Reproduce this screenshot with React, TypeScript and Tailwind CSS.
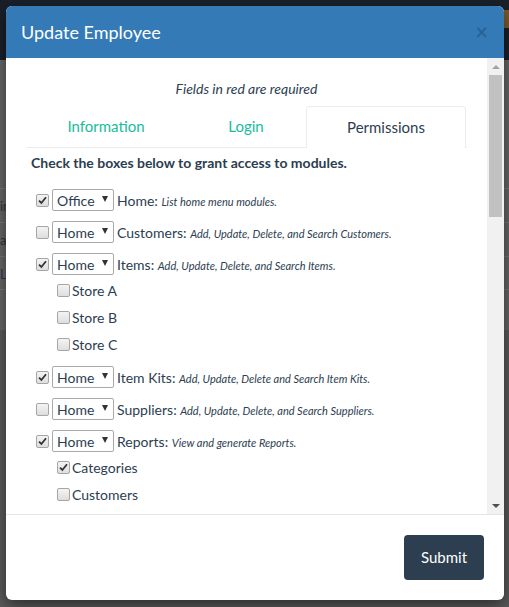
import React from 'react';

type Sub = { label: string; checked: boolean };
type Row = { checked: boolean; loc: string; name: string; desc: string; subs?: Sub[] };

const rows: Row[] = [
  { checked: true, loc: 'Office', name: 'Home', desc: 'List home menu modules.' },
  { checked: false, loc: 'Home', name: 'Customers', desc: 'Add, Update, Delete, and Search Customers.' },
  {
    checked: true,
    loc: 'Home',
    name: 'Items',
    desc: 'Add, Update, Delete, and Search Items.',
    subs: [
      { label: 'Store A', checked: false },
      { label: 'Store B', checked: false },
      { label: 'Store C', checked: false },
    ],
  },
  { checked: true, loc: 'Home', name: 'Item Kits', desc: 'Add, Update, Delete and Search Item Kits.' },
  { checked: false, loc: 'Home', name: 'Suppliers', desc: 'Add, Update, Delete, and Search Suppliers.' },
  {
    checked: true,
    loc: 'Home',
    name: 'Reports',
    desc: 'View and generate Reports.',
    subs: [
      { label: 'Categories', checked: true },
      { label: 'Customers', checked: false },
    ],
  },
];

function Check({ on }: { on: boolean }) {
  return (
    <span className="w-[13px] h-[13px] shrink-0 rounded-[2px] border border-[#a6a6a6] bg-gradient-to-b from-[#f4f4f4] to-[#dedede] flex items-center justify-center">
      {on && (
        <svg width="9" height="9" viewBox="0 0 9 9">
          <path d="M1 4.6 L3.4 7 L8 1.2" fill="none" stroke="#333" strokeWidth="1.8" />
        </svg>
      )}
    </span>
  );
}

function Select({ value }: { value: string }) {
  return (
    <span className="w-[62px] h-[22px] shrink-0 border border-[#a9a9a9] rounded-[2px] bg-white flex items-center justify-between pl-[4px] pr-[5px] text-[14px] text-[#2c3e50]">
      <span>{value}</span>
      <span className="w-0 h-0 border-x-[3.5px] border-x-transparent border-t-[6px] border-t-[#333] mb-[2px]" />
    </span>
  );
}

export default function App() {
  return (
    <div
      className="relative w-[509px] h-[607px] overflow-hidden bg-[#5a5a5a]"
      style={{ fontFamily: 'Lato, "Open Sans", sans-serif' }}
    >
      {/* page behind the overlay */}
      <div className="h-[60px] bg-[#1a202a] flex justify-end items-start pt-[10px]">
        <div className="w-[6px] h-[18px] bg-[#7a5c2c]" />
      </div>
      <div className="h-[270px] bg-[#666] pt-[128px]">
        <div className="h-[34px] border-t border-[#777] text-[13px] text-[#333] pt-[8px]">in</div>
        <div className="h-[34px] border-t border-[#777] text-[13px] text-[#333] pt-[8px]">ac</div>
        <div className="h-[34px] border-t border-b border-[#777] text-[13px] text-[#3a2f5a] pt-[8px]">Lh</div>
      </div>

      {/* modal */}
      <div className="absolute left-[6px] top-[6px] w-[498px] h-[594px] bg-white rounded-[6px] overflow-hidden shadow-[0_5px_15px_rgba(0,0,0,0.5)] flex flex-col">
        <div className="h-[52px] shrink-0 bg-[#337ab7] flex items-center justify-between pl-[15px] pr-[16px]">
          <span className="text-[18px] text-white">Update Employee</span>
          <span className="text-[22px] font-bold leading-none text-black/20">×</span>
        </div>

        <div className="h-[456px] shrink-0 flex">
          <div className="flex-1 overflow-hidden">
            <p className="pt-[21px] text-center italic text-[14px] leading-[20px] text-[#2c3e50]">
              Fields in red are required
            </p>

            <div className="mx-[20px] mt-[7px] flex border-b border-[#ececec] text-[15px]">
              <div className="w-[160px] h-[41px] flex items-center justify-center text-[#18bc9c]">Information</div>
              <div className="w-[120px] h-[41px] flex items-center justify-center text-[#18bc9c]">Login</div>
              <div className="w-[160px] h-[42px] -mb-px flex items-center justify-center text-[#2c3e50] bg-white border border-b-0 border-[#ececec] rounded-t-[4px]">
                Permissions
              </div>
            </div>

            <p className="pl-[25px] pt-[5px] text-[14px] leading-[20px] font-bold text-[#2c3e50]">
              Check the boxes below to grant access to modules.
            </p>

            <div className="pt-[11px] text-[#2c3e50]">
              {rows.map((r) => (
                <div key={r.name}>
                  <div className="h-[32px] flex items-center pl-[30px]">
                    <Check on={r.checked} />
                    <span className="ml-[3px]">
                      <Select value={r.loc} />
                    </span>
                    <span className="ml-[3px] text-[14px] whitespace-nowrap">
                      {r.name}: <i className="text-[11px]">{r.desc}</i>
                    </span>
                  </div>
                  {r.subs && (
                    <div className="-mt-[3px] pb-[3px]">
                      {r.subs.map((s) => (
                        <div key={s.label} className="h-[27px] flex items-center pl-[51px]">
                          <Check on={s.checked} />
                          <span className="ml-[2px] text-[14px]">{s.label}</span>
                        </div>
                      ))}
                    </div>
                  )}
                </div>
              ))}
            </div>
          </div>

          {/* scrollbar */}
          <div className="w-[17px] shrink-0 bg-[#f1f1f1] flex flex-col items-center">
            <div className="h-[17px] flex items-center justify-center">
              <span className="w-0 h-0 border-x-[4px] border-x-transparent border-b-[4px] border-b-[#a3a3a3]" />
            </div>
            <div className="w-[13px] h-[142px] bg-[#c1c1c1]" />
            <div className="flex-1" />
            <div className="h-[17px] flex items-center justify-center">
              <span className="w-0 h-0 border-x-[4px] border-x-transparent border-t-[4px] border-t-[#505050]" />
            </div>
          </div>
        </div>

        <div className="flex-1 border-t border-[#e5e5e5] flex justify-end items-start pt-[20px] pr-[20px]">
          <button className="w-[80px] h-[45px] rounded-[4px] bg-[#2c3e50] text-white text-[15px]">Submit</button>
        </div>
      </div>
    </div>
  );
}
